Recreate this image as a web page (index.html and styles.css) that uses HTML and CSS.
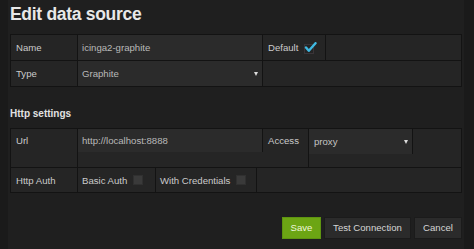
FILE: index.html
```html
<!DOCTYPE html>
<html>
<head>
<meta charset="utf-8">
<link rel="stylesheet" href="styles.css">
</head>
<body>
<div class="page">
  <h1 class="title">Edit data source</h1>
  <div class="form">
    <div class="row">
      <div class="cell label w-label">Name</div>
      <div class="cell input w-input">icinga2-graphite</div>
      <div class="cell label w-default">Default<span class="cb checked"><svg class="tick" width="13" height="12" viewBox="0 0 13 12"><path d="M2 5.5 L4.8 8.8 L11.5 1.2" fill="none" stroke="#3fb9e2" stroke-width="2.4" stroke-linecap="round" stroke-linejoin="round"/></svg></span></div>
    </div>
    <div class="row">
      <div class="cell label w-label">Type</div>
      <div class="cell input w-input">Graphite<span class="caret"></span></div>
    </div>
  </div>
  <h2 class="section">Http settings</h2>
  <div class="form form-flush">
    <div class="row row-tall">
      <div class="cell label w-label cell-top">Url</div>
      <div class="cell input w-input cell-short">http://localhost:8888</div>
      <div class="cell label w-access cell-top">Access</div>
      <div class="cell input w-proxy cell-mid">proxy<span class="caret"></span></div>
    </div>
    <div class="row row-auth">
      <div class="cell label w-label">Http Auth</div>
      <div class="cell label w-basic pad4">Basic Auth<span class="cb"></span></div>
      <div class="cell label w-cred pad4">With Credentials<span class="cb"></span></div>
    </div>
  </div>
  <div class="actions">
    <button class="btn btn-save">Save</button>
    <button class="btn btn-test">Test Connection</button>
    <button class="btn btn-cancel">Cancel</button>
  </div>
</div>
</body>
</html>
```
FILE: styles.css
```css
* { box-sizing: border-box; }
html, body { margin: 0; height: 100%; }
body {
  background: #1a1a1a;
  font-family: "Liberation Sans", Arial, sans-serif;
  font-size: 9.6px;
  color: #cbcbcb;
}
.page {
  margin-left: 8px;
  width: 456px;
  height: 249px;
  background: #1f1f1f;
  padding: 4px 2px 0 2px;
}
.title {
  margin: 0;
  font-size: 17.5px;
  letter-spacing: -0.3px;
  line-height: 20px;
  font-weight: bold;
  color: #e8e8e8;
}
.form {
  margin-top: 10px;
  border: 1px solid #131313;
  background: #252525;
}
.form-flush { margin-top: 0; }
.row {
  display: flex;
  height: 26px;
  border-bottom: 1px solid #131313;
}
.row:last-child { border-bottom: none; height: 25px; }
.row-tall { height: 39px; }
.row-auth:last-child { height: 24px; }
.cell {
  height: 100%;
  display: flex;
  align-items: center;
  padding-left: 5px;
  border-right: 1px solid #131313;
  line-height: 23px;
  white-space: nowrap;
}
.cell-top { align-items: flex-start; }
.input { background: #2b2b2b; color: #b9b9b9; padding-left: 4px; }
.cell-short { height: 23px; }
.cell-mid { height: 25px; }
.pad4 { padding-left: 4px; }
.w-label { width: 67px; }
.w-input { width: 185px; }
.w-default { width: 63px; }
.w-access { width: 46px; }
.w-proxy { width: 104px; padding-left: 5px; color: #c4c4c4; }
.w-basic { width: 78px; }
.w-cred { width: 101px; }
.caret {
  width: 0;
  height: 0;
  border-left: 2.5px solid transparent;
  border-right: 2.5px solid transparent;
  border-top: 4px solid #dcdcdc;
  margin-left: auto;
  margin-right: 4px;
}
.cb {
  position: relative;
  display: inline-block;
  width: 10px;
  height: 10px;
  margin-left: 6px;
  background: #3a3a3a;
  border: 1px solid #303030;
}
.cb.checked {
  background: #242424;
  border-color: #3a3438;
  margin-left: 6px;
  margin-top: 3px;
}
.tick {
  position: absolute;
  left: -1px;
  top: -3px;
}
.section {
  margin: 20px 0 7px;
  font-size: 10px;
  line-height: 14px;
  font-weight: bold;
  color: #e2e2e2;
}
.actions {
  display: flex;
  justify-content: flex-end;
  gap: 3px;
  margin-top: 24px;
}
.btn {
  height: 22px;
  padding: 0;
  border: 1px solid #1b1b1b;
  border-radius: 0;
  font-family: "Liberation Sans", Arial, sans-serif;
  font-size: 9.6px;
  line-height: 20px;
  color: #d6d6d6;
  background: #2b2b2b;
}
.btn-save { width: 39px; background: #6ca514; border-color: #5e9410; color: #eef7dc; }
.btn-test { width: 87px; }
.btn-cancel { width: 48px; }
```
